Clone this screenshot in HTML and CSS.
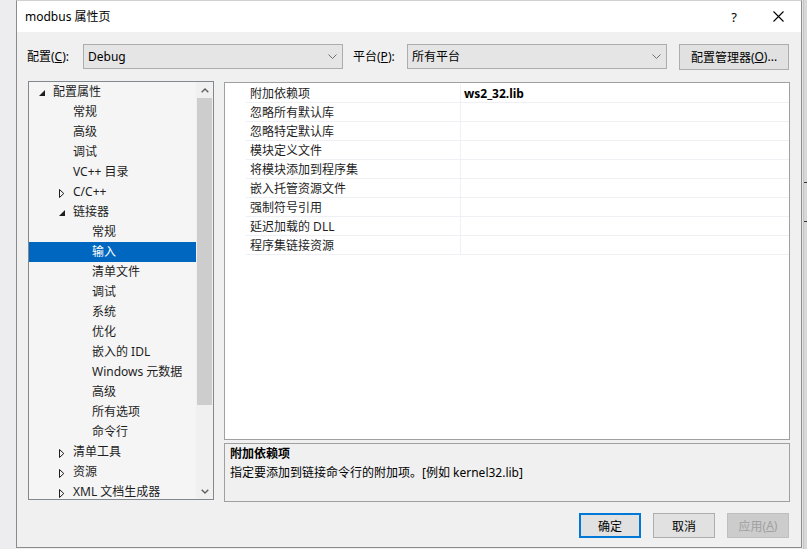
FILE: index.html
```html
<!DOCTYPE html>
<html lang="zh-CN">
<head>
<meta charset="utf-8">
<title>modbus 属性页</title>
<link rel="stylesheet" href="styles.css">
</head>
<body>
<div class="desk">
  <div class="win">
    <div class="titlebar">
      <span class="title">modbus 属性页</span>
      <span class="help">?</span>
      <span class="close"><svg width="11" height="11" viewBox="0 0 11 11"><path d="M0.5 0.5 L10.5 10.5 M10.5 0.5 L0.5 10.5" stroke="#000" stroke-width="1.1" fill="none"/></svg></span>
    </div>
    <div class="body">
      <div class="cfgrow">
        <span class="lbl">配置(<span class="ak">C</span>):</span>
        <div class="combo"><span class="ctext">Debug</span><svg class="chev" width="9" height="5" viewBox="0 0 9 5"><polyline points="0.5,0.5 4.5,4.5 8.5,0.5" stroke="#707070" fill="none"/></svg></div>
        <span class="lbl lbl2">平台(<span class="ak">P</span>):</span>
        <div class="combo combo2"><span class="ctext">所有平台</span><svg class="chev" width="9" height="5" viewBox="0 0 9 5"><polyline points="0.5,0.5 4.5,4.5 8.5,0.5" stroke="#707070" fill="none"/></svg></div>
        <div class="mgr">配置管理器(<span class="ak">O</span>)...</div>
      </div>
      <div class="main">
        <div class="tree">
          <div class="tree-list">
            <div class="node l0"><span class="exp"><svg width="6" height="6" viewBox="0 0 6 6"><polygon points="6,0 6,6 0,6" fill="#1e1e1e"/></svg></span><span class="label">配置属性</span></div>
            <div class="node l1"><span class="exp"></span><span class="label">常规</span></div>
            <div class="node l1"><span class="exp"></span><span class="label">高级</span></div>
            <div class="node l1"><span class="exp"></span><span class="label">调试</span></div>
            <div class="node l1"><span class="exp"></span><span class="label">VC++ 目录</span></div>
            <div class="node l1"><span class="exp"><svg width="6" height="9" viewBox="0 0 6 9"><polygon points="0.5,0.5 4.8,4.5 0.5,8.5" stroke="#1e1e1e" fill="none"/></svg></span><span class="label">C/C++</span></div>
            <div class="node l1"><span class="exp"><svg width="6" height="6" viewBox="0 0 6 6"><polygon points="6,0 6,6 0,6" fill="#1e1e1e"/></svg></span><span class="label">链接器</span></div>
            <div class="node l2"><span class="exp"></span><span class="label">常规</span></div>
            <div class="node l2 sel"><span class="exp"></span><span class="label">输入</span></div>
            <div class="node l2"><span class="exp"></span><span class="label">清单文件</span></div>
            <div class="node l2"><span class="exp"></span><span class="label">调试</span></div>
            <div class="node l2"><span class="exp"></span><span class="label">系统</span></div>
            <div class="node l2"><span class="exp"></span><span class="label">优化</span></div>
            <div class="node l2"><span class="exp"></span><span class="label">嵌入的 IDL</span></div>
            <div class="node l2"><span class="exp"></span><span class="label">Windows 元数据</span></div>
            <div class="node l2"><span class="exp"></span><span class="label">高级</span></div>
            <div class="node l2"><span class="exp"></span><span class="label">所有选项</span></div>
            <div class="node l2"><span class="exp"></span><span class="label">命令行</span></div>
            <div class="node l1"><span class="exp"><svg width="6" height="9" viewBox="0 0 6 9"><polygon points="0.5,0.5 4.8,4.5 0.5,8.5" stroke="#1e1e1e" fill="none"/></svg></span><span class="label">清单工具</span></div>
            <div class="node l1"><span class="exp"><svg width="6" height="9" viewBox="0 0 6 9"><polygon points="0.5,0.5 4.8,4.5 0.5,8.5" stroke="#1e1e1e" fill="none"/></svg></span><span class="label">资源</span></div>
            <div class="node l1"><span class="exp"><svg width="6" height="9" viewBox="0 0 6 9"><polygon points="0.5,0.5 4.8,4.5 0.5,8.5" stroke="#1e1e1e" fill="none"/></svg></span><span class="label">XML 文档生成器</span></div>
          </div>
          <div class="vscroll">
            <div class="sarrow"><svg width="8" height="5" viewBox="0 0 8 5"><polyline points="0.7,4.3 4,1 7.3,4.3" stroke="#606060" stroke-width="1.4" fill="none"/></svg></div>
            <div class="track"><div class="thumb"></div></div>
            <div class="sarrow"><svg width="8" height="5" viewBox="0 0 8 5"><polyline points="0.7,0.7 4,4 7.3,0.7" stroke="#606060" stroke-width="1.4" fill="none"/></svg></div>
          </div>
        </div>
        <div class="rightcol">
          <div class="grid">
            <div class="grow"><span class="gname">附加依赖项</span><span class="gval">ws2_32.lib</span></div>
            <div class="grow"><span class="gname">忽略所有默认库</span><span class="gval"></span></div>
            <div class="grow"><span class="gname">忽略特定默认库</span><span class="gval"></span></div>
            <div class="grow"><span class="gname">模块定义文件</span><span class="gval"></span></div>
            <div class="grow"><span class="gname">将模块添加到程序集</span><span class="gval"></span></div>
            <div class="grow"><span class="gname">嵌入托管资源文件</span><span class="gval"></span></div>
            <div class="grow"><span class="gname">强制符号引用</span><span class="gval"></span></div>
            <div class="grow"><span class="gname">延迟加载的 DLL</span><span class="gval"></span></div>
            <div class="grow"><span class="gname">程序集链接资源</span><span class="gval"></span></div>
          </div>
          <div class="desc">
            <div class="dtitle">附加依赖项</div>
            <div class="dtext">指定要添加到链接命令行的附加项。[例如 kernel32.lib]</div>
          </div>
        </div>
      </div>
      <div class="btnrow">
        <div class="btn default">确定</div>
        <div class="btn">取消</div>
        <div class="btn disabled">应用(<span class="ak">A</span>)</div>
      </div>
    </div>
  </div>
  <div class="edge">
    <div class="mark m1"></div>
    <div class="mark m2"></div>
  </div>
</div>
</body>
</html>
```

FILE: styles.css
```css
html, body {
  margin: 0;
  padding: 0;
}

body {
  background: #ededf0;
  font-family: "Noto Sans", "Noto Sans CJK SC", sans-serif;
  font-size: 12px;
  color: #000;
}

.desk {
  display: flex;
  width: 807px;
  height: 549px;
  overflow: hidden;
}

/* dialog window */
.win {
  flex: none;
  margin-left: 16px;
  width: 786px;
  height: 548px;
  box-sizing: border-box;
  border: 1px solid #8c8c8c;
  border-top-color: #d0d0d0;
  background: #f0f0f0;
  display: flex;
  flex-direction: column;
}

.titlebar {
  flex: none;
  height: 31px;
  background: #fff;
  display: flex;
  align-items: center;
  padding-left: 8px;
}

.title {
  flex: 1;
  line-height: 16px;
  color: #000;
}

.help {
  width: 44px;
  text-align: center;
  font-size: 13px;
  line-height: 16px;
}

.close {
  width: 45px;
  display: flex;
  justify-content: center;
  align-items: center;
}

.body {
  flex: 1;
  display: flex;
  flex-direction: column;
  padding: 12px 0 0 10px;
}

.ak {
  text-decoration: underline;
}

/* configuration row */
.cfgrow {
  display: flex;
  align-items: center;
  height: 25px;
}

.lbl {
  width: 56px;
  line-height: 16px;
}

.lbl2 {
  margin-left: 10px;
  width: 54px;
}

.combo {
  width: 260px;
  height: 25px;
  box-sizing: border-box;
  border: 1px solid #adadad;
  background: #e5e5e5;
  display: flex;
  align-items: center;
  padding: 0 5px 0 4px;
}

.ctext {
  flex: 1;
  line-height: 16px;
}

.mgr {
  margin-left: 12px;
  width: 110px;
  height: 26px;
  box-sizing: border-box;
  border: 1px solid #adadad;
  background: #e1e1e1;
  display: flex;
  align-items: center;
  justify-content: center;
}

/* tree + grid area */
.main {
  display: flex;
  margin-top: 12px;
}

.tree {
  flex: none;
  margin-left: 1px;
  width: 186px;
  height: 419px;
  box-sizing: border-box;
  border: 1px solid #828790;
  background: #f5f5f5;
  display: flex;
  overflow: hidden;
}

.tree-list {
  width: 167px;
  overflow: hidden;
}

.node {
  display: flex;
  align-items: center;
  height: 20px;
  color: #1e1e1e;
  white-space: nowrap;
}

.node.l0 { padding-left: 8px; }
.node.l1 { padding-left: 28px; }
.node.l2 { padding-left: 47px; }

.node.sel {
  background: #0067c0;
  color: #fff;
}

.exp {
  width: 16px;
  height: 20px;
  display: flex;
  align-items: center;
  padding-left: 2px;
  box-sizing: border-box;
}

.exp svg {
  margin-top: 2px;
}

.label {
  line-height: 16px;
}

.vscroll {
  width: 17px;
  display: flex;
  flex-direction: column;
  background: #f0f0f0;
}

.sarrow {
  height: 16px;
  flex: none;
  display: flex;
  align-items: center;
  justify-content: center;
}

.track {
  flex: 1;
  padding: 0 1px;
}

.thumb {
  height: 307px;
  background: #cdcdcd;
}

.rightcol {
  flex: none;
  margin-left: 10px;
  width: 566px;
  padding-top: 1px;
  display: flex;
  flex-direction: column;
}

.grid {
  height: 358px;
  box-sizing: border-box;
  border: 1px solid #a0a0a0;
  background: #fff;
  padding: 1px 0 0 21px;
}

.grow {
  display: flex;
  height: 19px;
  box-sizing: border-box;
  border-bottom: 1px solid #eff0f4;
  line-height: 20px;
}

.gname {
  width: 215px;
  box-sizing: border-box;
  padding-left: 4px;
  border-right: 1px solid #eff0f4;
  color: #1e1e1e;
}

.gval {
  flex: 1;
  padding-left: 3px;
  font-weight: bold;
}

.desc {
  margin-top: 3px;
  height: 59px;
  box-sizing: border-box;
  border: 1px solid #a0a0a0;
  background: #f0f0f0;
  padding-left: 5px;
  line-height: 19px;
}

.dtitle {
  font-weight: bold;
}

/* dialog buttons */
.btnrow {
  display: flex;
  justify-content: flex-end;
  gap: 12px;
  padding-right: 12px;
  margin-top: 11px;
}

.btn {
  width: 62px;
  height: 25px;
  box-sizing: border-box;
  border: 1px solid #adadad;
  background: #e1e1e1;
  display: flex;
  align-items: center;
  justify-content: center;
}

.btn.default {
  border: 2px solid #0078d7;
}

.btn.disabled {
  background: #cccccc;
  border-color: #bfbfbf;
  color: #a0a0a0;
}

/* strip of the window behind */
.edge {
  flex: 1;
  background: linear-gradient(to right, #e6e6e6 0 1px, #c6c6c6 1px 2px, #d8d8d8 2px);
  display: flex;
  flex-direction: column;
  align-items: flex-end;
}

.mark {
  width: 3px;
  height: 1px;
  background: #333;
}

.m1 { margin-top: 182px; }
.m2 { margin-top: 38px; }
```
